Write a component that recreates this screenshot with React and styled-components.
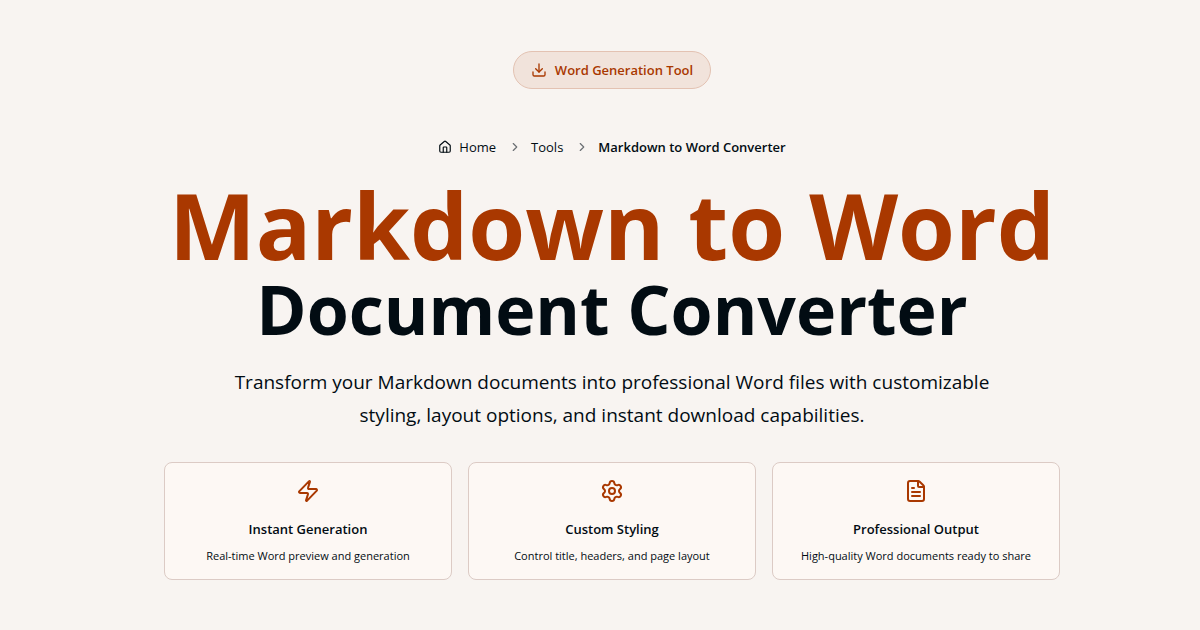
import React from "react";
import styled, { createGlobalStyle } from "styled-components";
import { Download, House, ChevronRight, Zap, Settings, FileText } from "lucide-react";

const GlobalStyle = createGlobalStyle`
  * { box-sizing: border-box; }
  body {
    margin: 0;
    background: #f8f4f1;
    color: #020c13;
    font-family: "Segoe UI", "Open Sans", "Noto Sans", sans-serif;
  }
`;

const Hero = styled.main`
  display: flex;
  flex-direction: column;
  align-items: center;
  padding: 51px 24px 50px 48px;
  text-align: center;
`;

const Badge = styled.div`
  display: inline-flex;
  align-items: center;
  gap: 8px;
  height: 38px;
  padding: 0 17px;
  border: 1px solid #e3c2b2;
  border-radius: 19px;
  background: #f1e3db;
  color: #a93800;
  font-size: 13px;
  font-weight: 600;
`;

const Crumbs = styled.ol`
  display: flex;
  align-items: center;
  gap: 9px;
  margin: 48px 0 0;
  padding: 0;
  list-style: none;
  font-size: 13px;
  line-height: 20px;
`;

const Crumb = styled.li`
  display: flex;
  align-items: center;
  gap: 12px;
  font-weight: ${(p) => (p.$current ? 600 : 400)};
`;

const CrumbLink = styled.a`
  display: flex;
  align-items: center;
  gap: 7px;
  color: inherit;
  text-decoration: none;
`;

const Separator = styled(ChevronRight)`
  color: #6b6f73;
`;

const Title = styled.h1`
  margin: 20px 0 0;
  font-weight: 700;
`;

const TitleLine = styled.span`
  display: block;
  color: ${(p) => (p.$accent ? "#a93800" : "#020c13")};
  font-size: ${(p) => (p.$accent ? 92 : 68)}px;
  line-height: ${(p) => (p.$accent ? 96 : 72)}px;
`;

const Lead = styled.p`
  max-width: 768px;
  margin: 21px 0 0;
  font-size: 19px;
  line-height: 33px;
`;

const Features = styled.section`
  display: grid;
  grid-template-columns: repeat(3, 1fr);
  gap: 16px;
  width: 100%;
  max-width: 896px;
  margin-top: 30px;
`;

const Card = styled.article`
  display: flex;
  flex-direction: column;
  align-items: center;
  padding: 16px 16px 14px;
  border: 1px solid #dccbc5;
  border-radius: 8px;
  background: #fdf8f4;
  svg { color: #a93800; }
`;

const CardTitle = styled.h2`
  margin: 16px 0 0;
  font-size: 13px;
  font-weight: 600;
  line-height: 20px;
`;

const CardText = styled.p`
  margin: 8px 0 0;
  font-size: 11px;
  line-height: 18px;
`;

const features = [
  { icon: Zap, title: "Instant Generation", text: "Real-time Word preview and generation" },
  { icon: Settings, title: "Custom Styling", text: "Control title, headers, and page layout" },
  { icon: FileText, title: "Professional Output", text: "High-quality Word documents ready to share" },
];

export default function App() {
  return (
    <>
      <GlobalStyle />
      <Hero>
        <Badge><Download size={16} />Word Generation Tool</Badge>
        <nav aria-label="Breadcrumb">
          <Crumbs>
            <Crumb><CrumbLink href="#home"><House size={14} />Home</CrumbLink><Separator size={14} /></Crumb>
            <Crumb><CrumbLink href="#tools">Tools</CrumbLink><Separator size={14} /></Crumb>
            <Crumb $current aria-current="page">Markdown to Word Converter</Crumb>
          </Crumbs>
        </nav>
        <Title>
          <TitleLine $accent>Markdown to Word</TitleLine>
          <TitleLine>Document Converter</TitleLine>
        </Title>
        <Lead>
          Transform your Markdown documents into professional Word files with customizable styling, layout options, and instant download capabilities.
        </Lead>
        <Features>
          {features.map(({ icon: Icon, title, text }) => (
            <Card key={title}>
              <Icon size={24} />
              <CardTitle>{title}</CardTitle>
              <CardText>{text}</CardText>
            </Card>
          ))}
        </Features>
      </Hero>
    </>
  );
}
